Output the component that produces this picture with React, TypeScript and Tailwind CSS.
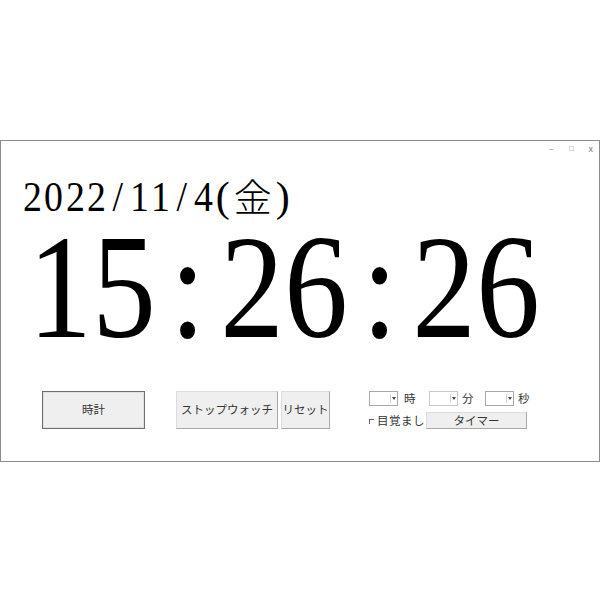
import React from 'react'

const serif = { fontFamily: '"Liberation Serif", "Noto Sans CJK JP", serif' }
const ui = { fontFamily: '"Noto Sans CJK JP", "Liberation Sans", sans-serif' }

// 等幅で1文字ずつ並べる（明朝の半角幅っぽく）
function Mono({ text, pitch, scale }: { text: string; pitch: string; scale: string }) {
  return (
    <>
      {text.split('').map((c, i) => (
        <span key={i} className={`inline-flex justify-center ${pitch}`}>
          <span className={`inline-block ${scale}`}>{c}</span>
        </span>
      ))}
    </>
  )
}

function Combo({ faded }: { faded?: boolean }) {
  return (
    <div className={`flex h-[15px] w-[29px] items-center justify-end bg-white border ${faded ? 'border-[#c8c8c8]' : 'border-[#a8a8a8]'}`}>
      <div className="mr-[1px] flex h-[9px] w-[6px] items-center justify-center border-l border-[#d0d0d0]">
        <div className="h-0 w-0 border-l-[2px] border-r-[2px] border-t-[3px] border-l-transparent border-r-transparent border-t-[#444]" />
      </div>
    </div>
  )
}

export default function App() {
  return (
    <div className="h-[600px] w-[600px] bg-white pt-[140px]">
      <div className="h-[322px] w-[600px] border border-[#8c8c8c] bg-white">
        {/* タイトルバーのボタン */}
        <div className="flex h-[14px] items-center justify-end gap-[15px] pr-[6px] text-[9px] leading-none" style={ui}>
          <span className="text-[#8a8a8a]">–</span>
          <span className="inline-block h-[5px] w-[5px] border border-[#d8d8d8]" />
          <span className="text-[#7a7a7a]">x</span>
        </div>

        {/* 日付 */}
        <div className="ml-[21px] mt-[19px] h-[42px] whitespace-nowrap text-[42px] leading-[42px] text-black" style={serif}>
          <Mono text="2022/11/4" pitch="w-[21.3px]" scale="scale-x-[0.9]" />
          <span className="inline-block w-[18px] text-center">(</span>
          <span className="inline-block w-[42px] text-center text-[38px]" style={{ fontFamily: '"Noto Sans CJK JP", serif', fontWeight: 300 }}>金</span>
          <span className="inline-block w-[18px] text-center">)</span>
        </div>

        {/* 時刻 */}
        <div className="ml-[27px] mt-[-3px] h-[148px] whitespace-nowrap text-[148px] leading-[148px] text-black" style={serif}>
          <Mono text="15:26:26" pitch="w-[64px]" scale="scale-x-[0.86]" />
        </div>

        {/* 操作部 */}
        <div className="mt-[30px] flex items-start whitespace-nowrap text-[11.5px] text-[#333]" style={ui}>
          <button className="ml-[41px] flex h-[38px] w-[103px] items-center justify-center border border-[#6e6e6e] bg-[#efefef] shadow-[inset_0_0_0_1px_#e0e0e0]">
            時計
          </button>
          <button className="ml-[31px] flex h-[38px] w-[102px] items-center justify-center border border-[#dcdcdc] border-b-[#a8a8a8] border-r-[#a8a8a8] bg-[#efefef]">
            ストップウォッチ
          </button>
          <button className="ml-[3px] flex h-[38px] w-[49px] items-center justify-center border border-[#dcdcdc] border-b-[#a8a8a8] border-r-[#a8a8a8] bg-[#efefef]">
            リセット
          </button>

          <div className="ml-[39px] flex flex-col">
            <div className="flex h-[15px] items-center">
              <Combo />
              <span className="ml-[6px] w-[25px] leading-none">時</span>
              <Combo faded />
              <span className="ml-[4px] w-[23px] leading-none">分</span>
              <Combo />
              <span className="ml-[4px] leading-none">秒</span>
            </div>
            <div className="mt-[6px] flex h-[17px] items-center">
              <div className="mt-[2px] h-[5px] w-[5px] border-l border-t border-[#666]" />
              <span className="ml-[3px] w-[49px] leading-none tracking-[0.5px]">目覚まし</span>
              <button className="flex h-[17px] w-[101px] items-center justify-center border border-[#dcdcdc] border-b-[#a8a8a8] border-r-[#a8a8a8] bg-[#efefef] leading-none">
                タイマー
              </button>
            </div>
          </div>
        </div>
      </div>
    </div>
  )
}
